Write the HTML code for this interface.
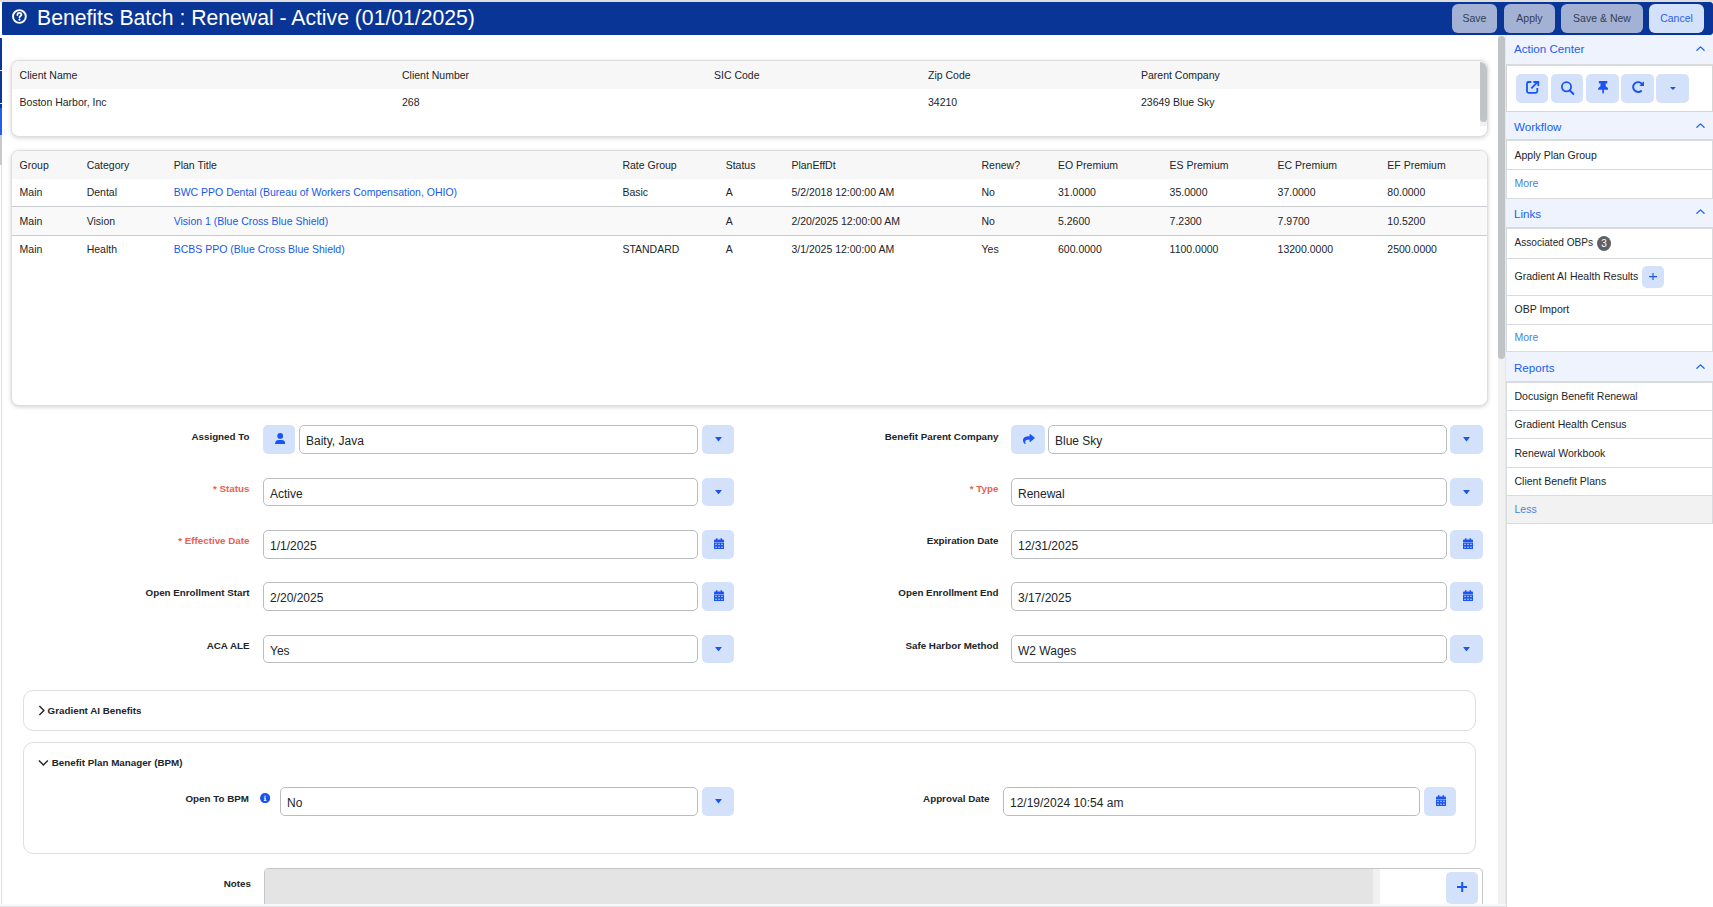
<!DOCTYPE html>
<html><head><meta charset="utf-8"><title>Benefits Batch</title>
<style>
html,body{margin:0;padding:0;}
body{width:1713px;height:907px;position:relative;overflow:hidden;background:#fff;font-family:"Liberation Sans",sans-serif;}
.t{position:absolute;white-space:nowrap;line-height:1;}
.r{position:absolute;}
.hb{border-radius:6px;font-size:10.5px;display:flex;align-items:center;justify-content:center;}
.ib{background:#d4e1fb;border-radius:5px;}
.inp{border:1px solid #b9bdc1;border-radius:5px;background:#fff;box-sizing:border-box;}
</style></head><body>
<div class="r" style="left:0px;top:0px;width:1713px;height:2px;background:#dedede"></div>
<div class="r" style="left:0px;top:2px;width:2px;height:36px;background:#ffffff"></div>
<div class="r" style="left:0px;top:38px;width:1.5px;height:70px;background:#0a3797"></div>
<div class="r" style="left:0px;top:70px;width:1.5px;height:1px;background:#e8ecf5"></div>
<div class="r" style="left:0px;top:103px;width:1.5px;height:1px;background:#e8ecf5"></div>
<div class="r" style="left:0px;top:108px;width:1.5px;height:27px;background:#1f5ff0"></div>
<div class="r" style="left:0px;top:135px;width:1.5px;height:30px;background:#c9c9c9"></div>
<div class="r" style="left:1px;top:165px;width:1px;height:742px;background:#e2e2e2"></div>
<div class="r" style="left:2px;top:2px;width:1711px;height:33px;background:#093696;border-radius:1px 3px 3px 1px"></div>
<svg class="r" style="left:11px;top:9px" width="17" height="16" viewBox="0 0 17 16"><circle cx="8.4" cy="7.5" r="6.4" fill="none" stroke="#fff" stroke-width="1.9"/><path d="M6.4 6.0 C6.4 4.6 7.3 3.9 8.4 3.9 C9.6 3.9 10.4 4.7 10.4 5.7 C10.4 7.0 8.5 7.1 8.5 8.6" fill="none" stroke="#fff" stroke-width="1.8" stroke-linecap="round"/><circle cx="8.5" cy="10.7" r="1.05" fill="#fff"/></svg>
<div class="t" style="left:36.6px;top:8.00px;font-size:21.5px;color:#ffffff;font-weight:normal;transform:scaleX(0.985);transform-origin:0 0;">Benefits Batch : Renewal - Active (01/01/2025)</div>
<div class="r hb" style="left:1452px;top:4px;width:45px;height:29px;background:#a3b2d4;color:#333c52;box-sizing:border-box;padding-bottom:2px">Save</div>
<div class="r hb" style="left:1504px;top:4px;width:51px;height:29px;background:#a3b2d4;color:#333c52;box-sizing:border-box;padding-bottom:2px">Apply</div>
<div class="r hb" style="left:1561px;top:4px;width:82px;height:29px;background:#a3b2d4;color:#333c52;box-sizing:border-box;padding-bottom:2px">Save &amp; New</div>
<div class="r hb" style="left:1649px;top:4px;width:55px;height:29px;background:#d4e1fb;color:#2a62e8;box-sizing:border-box;padding-bottom:2px">Cancel</div>
<div class="r" style="left:1498px;top:35px;width:8px;height:872px;background:#f1f1f1"></div>
<div class="r" style="left:1498px;top:36px;width:7px;height:323px;background:#c1c4c7;border-radius:3.5px"></div>
<div class="r" style="left:1505px;top:35px;width:1px;height:872px;background:#e6e6e6"></div>
<div class="r" style="left:11px;top:60px;width:1477px;height:77px;border:1px solid #dcdfe2;border-radius:8px;box-shadow:0 1px 4px rgba(0,0,0,0.18);background:#fff;box-sizing:border-box"></div>
<div class="r" style="left:12px;top:61px;width:1468px;height:28px;background:#f7f7f7;border-radius:7px 0 0 0"></div>
<div class="r" style="left:1480px;top:61px;width:7px;height:65px;background:#f1f1f1;border-radius:0 7px 0 0"></div>
<div class="r" style="left:1480px;top:62px;width:7px;height:59.5px;background:#c1c4c7;border-radius:0 7px 3.5px 3.5px"></div>
<div class="t" style="left:19.6px;top:70.01px;font-size:10.5px;color:#212529;font-weight:normal;">Client Name</div>
<div class="t" style="left:19.6px;top:96.81px;font-size:10.5px;color:#212529;font-weight:normal;">Boston Harbor, Inc</div>
<div class="t" style="left:402px;top:70.01px;font-size:10.5px;color:#212529;font-weight:normal;">Client Number</div>
<div class="t" style="left:402px;top:96.81px;font-size:10.5px;color:#212529;font-weight:normal;">268</div>
<div class="t" style="left:714px;top:70.01px;font-size:10.5px;color:#212529;font-weight:normal;">SIC Code</div>
<div class="t" style="left:928px;top:70.01px;font-size:10.5px;color:#212529;font-weight:normal;">Zip Code</div>
<div class="t" style="left:928px;top:96.81px;font-size:10.5px;color:#212529;font-weight:normal;">34210</div>
<div class="t" style="left:1141px;top:70.01px;font-size:10.5px;color:#212529;font-weight:normal;">Parent Company</div>
<div class="t" style="left:1141px;top:96.81px;font-size:10.5px;color:#212529;font-weight:normal;">23649 Blue Sky</div>
<div class="r" style="left:11px;top:150px;width:1477px;height:256px;border:1px solid #dcdfe2;border-radius:8px;box-shadow:0 1px 4px rgba(0,0,0,0.18);background:#fff;box-sizing:border-box"></div>
<div class="r" style="left:12px;top:151px;width:1475px;height:28px;background:#f7f7f7;border-radius:7px 7px 0 0"></div>
<div class="r" style="left:12px;top:206px;width:1475px;height:1px;background:#c9cdd1"></div>
<div class="r" style="left:12px;top:207px;width:1475px;height:28px;background:#f9f9f9"></div>
<div class="r" style="left:12px;top:235px;width:1475px;height:1px;background:#c9cdd1"></div>
<div class="t" style="left:19.6px;top:160.01px;font-size:10.5px;color:#212529;font-weight:normal;">Group</div>
<div class="t" style="left:86.7px;top:160.01px;font-size:10.5px;color:#212529;font-weight:normal;">Category</div>
<div class="t" style="left:173.7px;top:160.01px;font-size:10.5px;color:#212529;font-weight:normal;">Plan Title</div>
<div class="t" style="left:622.4px;top:160.01px;font-size:10.5px;color:#212529;font-weight:normal;">Rate Group</div>
<div class="t" style="left:725.7px;top:160.01px;font-size:10.5px;color:#212529;font-weight:normal;">Status</div>
<div class="t" style="left:791.4px;top:160.01px;font-size:10.5px;color:#212529;font-weight:normal;">PlanEffDt</div>
<div class="t" style="left:981.5px;top:160.01px;font-size:10.5px;color:#212529;font-weight:normal;">Renew?</div>
<div class="t" style="left:1058px;top:160.01px;font-size:10.5px;color:#212529;font-weight:normal;">EO Premium</div>
<div class="t" style="left:1169.6px;top:160.01px;font-size:10.5px;color:#212529;font-weight:normal;">ES Premium</div>
<div class="t" style="left:1277.6px;top:160.01px;font-size:10.5px;color:#212529;font-weight:normal;">EC Premium</div>
<div class="t" style="left:1387.3px;top:160.01px;font-size:10.5px;color:#212529;font-weight:normal;">EF Premium</div>
<div class="t" style="left:19.6px;top:187.31px;font-size:10.5px;color:#212529;font-weight:normal;">Main</div>
<div class="t" style="left:86.7px;top:187.31px;font-size:10.5px;color:#212529;font-weight:normal;">Dental</div>
<div class="t" style="left:173.7px;top:187.31px;font-size:10.5px;color:#1659ea;font-weight:normal;">BWC PPO Dental (Bureau of Workers Compensation, OHIO)</div>
<div class="t" style="left:622.4px;top:187.31px;font-size:10.5px;color:#212529;font-weight:normal;">Basic</div>
<div class="t" style="left:725.7px;top:187.31px;font-size:10.5px;color:#212529;font-weight:normal;">A</div>
<div class="t" style="left:791.4px;top:187.31px;font-size:10.5px;color:#212529;font-weight:normal;">5/2/2018 12:00:00 AM</div>
<div class="t" style="left:981.5px;top:187.31px;font-size:10.5px;color:#212529;font-weight:normal;">No</div>
<div class="t" style="left:1058px;top:187.31px;font-size:10.5px;color:#212529;font-weight:normal;">31.0000</div>
<div class="t" style="left:1169.6px;top:187.31px;font-size:10.5px;color:#212529;font-weight:normal;">35.0000</div>
<div class="t" style="left:1277.6px;top:187.31px;font-size:10.5px;color:#212529;font-weight:normal;">37.0000</div>
<div class="t" style="left:1387.3px;top:187.31px;font-size:10.5px;color:#212529;font-weight:normal;">80.0000</div>
<div class="t" style="left:19.6px;top:215.81px;font-size:10.5px;color:#212529;font-weight:normal;">Main</div>
<div class="t" style="left:86.7px;top:215.81px;font-size:10.5px;color:#212529;font-weight:normal;">Vision</div>
<div class="t" style="left:173.7px;top:215.81px;font-size:10.5px;color:#1659ea;font-weight:normal;">Vision 1 (Blue Cross Blue Shield)</div>
<div class="t" style="left:725.7px;top:215.81px;font-size:10.5px;color:#212529;font-weight:normal;">A</div>
<div class="t" style="left:791.4px;top:215.81px;font-size:10.5px;color:#212529;font-weight:normal;">2/20/2025 12:00:00 AM</div>
<div class="t" style="left:981.5px;top:215.81px;font-size:10.5px;color:#212529;font-weight:normal;">No</div>
<div class="t" style="left:1058px;top:215.81px;font-size:10.5px;color:#212529;font-weight:normal;">5.2600</div>
<div class="t" style="left:1169.6px;top:215.81px;font-size:10.5px;color:#212529;font-weight:normal;">7.2300</div>
<div class="t" style="left:1277.6px;top:215.81px;font-size:10.5px;color:#212529;font-weight:normal;">7.9700</div>
<div class="t" style="left:1387.3px;top:215.81px;font-size:10.5px;color:#212529;font-weight:normal;">10.5200</div>
<div class="t" style="left:19.6px;top:244.31px;font-size:10.5px;color:#212529;font-weight:normal;">Main</div>
<div class="t" style="left:86.7px;top:244.31px;font-size:10.5px;color:#212529;font-weight:normal;">Health</div>
<div class="t" style="left:173.7px;top:244.31px;font-size:10.5px;color:#1659ea;font-weight:normal;">BCBS PPO (Blue Cross Blue Shield)</div>
<div class="t" style="left:622.4px;top:244.31px;font-size:10.5px;color:#212529;font-weight:normal;">STANDARD</div>
<div class="t" style="left:725.7px;top:244.31px;font-size:10.5px;color:#212529;font-weight:normal;">A</div>
<div class="t" style="left:791.4px;top:244.31px;font-size:10.5px;color:#212529;font-weight:normal;">3/1/2025 12:00:00 AM</div>
<div class="t" style="left:981.5px;top:244.31px;font-size:10.5px;color:#212529;font-weight:normal;">Yes</div>
<div class="t" style="left:1058px;top:244.31px;font-size:10.5px;color:#212529;font-weight:normal;">600.0000</div>
<div class="t" style="left:1169.6px;top:244.31px;font-size:10.5px;color:#212529;font-weight:normal;">1100.0000</div>
<div class="t" style="left:1277.6px;top:244.31px;font-size:10.5px;color:#212529;font-weight:normal;">13200.0000</div>
<div class="t" style="left:1387.3px;top:244.31px;font-size:10.5px;color:#212529;font-weight:normal;">2500.0000</div>
<div class="t" style="right:1463.5px;top:431.90px;font-size:9.8px;color:#212529;font-weight:bold;text-align:right;">Assigned To</div>
<div class="r ib" style="left:263px;top:425px;width:32px;height:29px"></div>
<svg class="r" style="left:274.8px;top:433px" width="10.4" height="11.3" viewBox="0 0 10.4 11.3" ><circle cx="5.2" cy="2.9" r="2.9" fill="#1a55f2"/><path d="M0 11.3 Q0.2 6.9 3.4 6.9 H7 Q10.2 6.9 10.4 11.3 Z" fill="#1a55f2"/></svg>
<div class="r inp" style="left:299px;top:425px;width:399px;height:29px"></div>
<div class="t" style="left:306px;top:434.64px;font-size:12px;color:#212529;font-weight:normal;">Baity, Java</div>
<div class="r ib" style="left:702px;top:425px;width:32px;height:29px"></div>
<svg class="r" style="left:714.8px;top:437.3px" width="7" height="4.4" viewBox="0 0 7 4.4" ><path d="M0.2 0.3 Q0 0 0.4 0 H6.6 Q7 0 6.8 0.3 L3.5 4.4 Z" fill="#1a55f2"/></svg>
<div class="t" style="right:714.5px;top:431.90px;font-size:9.8px;color:#212529;font-weight:bold;text-align:right;">Benefit Parent Company</div>
<div class="r ib" style="left:1011px;top:425px;width:34px;height:29px"></div>
<svg class="r" style="left:1023px;top:433.8px" width="11.7" height="10.2" viewBox="0 32 512 448" ><path d="M503.691 189.836L327.687 37.851C312.281 24.546 288 35.347 288 56.015v80.053C127.371 137.907 0 170.1 0 322.326c0 61.441 39.581 122.309 83.333 154.132 13.653 9.931 33.111-2.533 28.077-18.631C66.066 312.814 132.917 274.316 288 272.085V360c0 20.7 24.3 31.453 39.687 18.164l176.004-152c11.071-9.562 11.086-26.753 0-36.328z" fill="#1a55f2"/></svg>
<div class="r inp" style="left:1048px;top:425px;width:399px;height:29px"></div>
<div class="t" style="left:1055px;top:434.64px;font-size:12px;color:#212529;font-weight:normal;">Blue Sky</div>
<div class="r ib" style="left:1450px;top:425px;width:33px;height:29px"></div>
<svg class="r" style="left:1463.3px;top:437.3px" width="7" height="4.4" viewBox="0 0 7 4.4" ><path d="M0.2 0.3 Q0 0 0.4 0 H6.6 Q7 0 6.8 0.3 L3.5 4.4 Z" fill="#1a55f2"/></svg>
<div class="t" style="right:1463.5px;top:484.00px;font-size:9.8px;color:#ec5d54;font-weight:bold;text-align:right;">* Status</div>
<div class="r inp" style="left:263px;top:478px;width:435px;height:28px"></div>
<div class="t" style="left:270px;top:487.64px;font-size:12px;color:#212529;font-weight:normal;">Active</div>
<div class="r ib" style="left:702px;top:478px;width:32px;height:28px"></div>
<svg class="r" style="left:714.8px;top:489.8px" width="7" height="4.4" viewBox="0 0 7 4.4" ><path d="M0.2 0.3 Q0 0 0.4 0 H6.6 Q7 0 6.8 0.3 L3.5 4.4 Z" fill="#1a55f2"/></svg>
<div class="t" style="right:714.5px;top:484.00px;font-size:9.8px;color:#ec5d54;font-weight:bold;text-align:right;">* Type</div>
<div class="r inp" style="left:1011px;top:478px;width:436px;height:28px"></div>
<div class="t" style="left:1018px;top:487.64px;font-size:12px;color:#212529;font-weight:normal;">Renewal</div>
<div class="r ib" style="left:1450px;top:478px;width:33px;height:28px"></div>
<svg class="r" style="left:1463.3px;top:489.8px" width="7" height="4.4" viewBox="0 0 7 4.4" ><path d="M0.2 0.3 Q0 0 0.4 0 H6.6 Q7 0 6.8 0.3 L3.5 4.4 Z" fill="#1a55f2"/></svg>
<div class="t" style="right:1463.5px;top:536.00px;font-size:9.8px;color:#ec5d54;font-weight:bold;text-align:right;">* Effective Date</div>
<div class="r inp" style="left:263px;top:530px;width:435px;height:29px"></div>
<div class="t" style="left:270px;top:539.64px;font-size:12px;color:#212529;font-weight:normal;">1/1/2025</div>
<div class="r ib" style="left:702px;top:530px;width:32px;height:29px"></div>
<svg class="r" style="left:714.0px;top:538.0500000000001px" width="10" height="11.3" viewBox="0 0 10 11.3" ><rect x="2" y="0" width="1.4" height="2.4" rx="0.5" fill="#1a55f2"/><rect x="6.6" y="0" width="1.4" height="2.4" rx="0.5" fill="#1a55f2"/><path d="M0 2.6 Q0 1.4 1 1.4 H9 Q10 1.4 10 2.6 V3.9 H0 Z" fill="#1a55f2"/><path d="M0 4.4 H10 V10.3 Q10 11.3 9 11.3 H1 Q0 11.3 0 10.3 Z" fill="#1a55f2"/><g fill="#d4e1fb"><rect x="1.4" y="5.75" width="1.3" height="1.3"/><rect x="4.35" y="5.75" width="1.3" height="1.3"/><rect x="7.3" y="5.75" width="1.3" height="1.3"/><rect x="1.4" y="8.65" width="1.3" height="1.3"/><rect x="4.35" y="8.65" width="1.3" height="1.3"/><rect x="7.3" y="8.65" width="1.3" height="1.3"/></g></svg>
<div class="t" style="right:714.5px;top:536.00px;font-size:9.8px;color:#212529;font-weight:bold;text-align:right;">Expiration Date</div>
<div class="r inp" style="left:1011px;top:530px;width:436px;height:29px"></div>
<div class="t" style="left:1018px;top:539.64px;font-size:12px;color:#212529;font-weight:normal;">12/31/2025</div>
<div class="r ib" style="left:1450px;top:530px;width:33px;height:29px"></div>
<svg class="r" style="left:1462.5px;top:538.0500000000001px" width="10" height="11.3" viewBox="0 0 10 11.3" ><rect x="2" y="0" width="1.4" height="2.4" rx="0.5" fill="#1a55f2"/><rect x="6.6" y="0" width="1.4" height="2.4" rx="0.5" fill="#1a55f2"/><path d="M0 2.6 Q0 1.4 1 1.4 H9 Q10 1.4 10 2.6 V3.9 H0 Z" fill="#1a55f2"/><path d="M0 4.4 H10 V10.3 Q10 11.3 9 11.3 H1 Q0 11.3 0 10.3 Z" fill="#1a55f2"/><g fill="#d4e1fb"><rect x="1.4" y="5.75" width="1.3" height="1.3"/><rect x="4.35" y="5.75" width="1.3" height="1.3"/><rect x="7.3" y="5.75" width="1.3" height="1.3"/><rect x="1.4" y="8.65" width="1.3" height="1.3"/><rect x="4.35" y="8.65" width="1.3" height="1.3"/><rect x="7.3" y="8.65" width="1.3" height="1.3"/></g></svg>
<div class="t" style="right:1463.5px;top:588.00px;font-size:9.8px;color:#212529;font-weight:bold;text-align:right;">Open Enrollment Start</div>
<div class="r inp" style="left:263px;top:582px;width:435px;height:29px"></div>
<div class="t" style="left:270px;top:591.64px;font-size:12px;color:#212529;font-weight:normal;">2/20/2025</div>
<div class="r ib" style="left:702px;top:582px;width:32px;height:29px"></div>
<svg class="r" style="left:714.0px;top:590.0500000000001px" width="10" height="11.3" viewBox="0 0 10 11.3" ><rect x="2" y="0" width="1.4" height="2.4" rx="0.5" fill="#1a55f2"/><rect x="6.6" y="0" width="1.4" height="2.4" rx="0.5" fill="#1a55f2"/><path d="M0 2.6 Q0 1.4 1 1.4 H9 Q10 1.4 10 2.6 V3.9 H0 Z" fill="#1a55f2"/><path d="M0 4.4 H10 V10.3 Q10 11.3 9 11.3 H1 Q0 11.3 0 10.3 Z" fill="#1a55f2"/><g fill="#d4e1fb"><rect x="1.4" y="5.75" width="1.3" height="1.3"/><rect x="4.35" y="5.75" width="1.3" height="1.3"/><rect x="7.3" y="5.75" width="1.3" height="1.3"/><rect x="1.4" y="8.65" width="1.3" height="1.3"/><rect x="4.35" y="8.65" width="1.3" height="1.3"/><rect x="7.3" y="8.65" width="1.3" height="1.3"/></g></svg>
<div class="t" style="right:714.5px;top:588.00px;font-size:9.8px;color:#212529;font-weight:bold;text-align:right;">Open Enrollment End</div>
<div class="r inp" style="left:1011px;top:582px;width:436px;height:29px"></div>
<div class="t" style="left:1018px;top:591.64px;font-size:12px;color:#212529;font-weight:normal;">3/17/2025</div>
<div class="r ib" style="left:1450px;top:582px;width:33px;height:29px"></div>
<svg class="r" style="left:1462.5px;top:590.0500000000001px" width="10" height="11.3" viewBox="0 0 10 11.3" ><rect x="2" y="0" width="1.4" height="2.4" rx="0.5" fill="#1a55f2"/><rect x="6.6" y="0" width="1.4" height="2.4" rx="0.5" fill="#1a55f2"/><path d="M0 2.6 Q0 1.4 1 1.4 H9 Q10 1.4 10 2.6 V3.9 H0 Z" fill="#1a55f2"/><path d="M0 4.4 H10 V10.3 Q10 11.3 9 11.3 H1 Q0 11.3 0 10.3 Z" fill="#1a55f2"/><g fill="#d4e1fb"><rect x="1.4" y="5.75" width="1.3" height="1.3"/><rect x="4.35" y="5.75" width="1.3" height="1.3"/><rect x="7.3" y="5.75" width="1.3" height="1.3"/><rect x="1.4" y="8.65" width="1.3" height="1.3"/><rect x="4.35" y="8.65" width="1.3" height="1.3"/><rect x="7.3" y="8.65" width="1.3" height="1.3"/></g></svg>
<div class="t" style="right:1463.5px;top:641.00px;font-size:9.8px;color:#212529;font-weight:bold;text-align:right;">ACA ALE</div>
<div class="r inp" style="left:263px;top:635px;width:435px;height:28px"></div>
<div class="t" style="left:270px;top:644.64px;font-size:12px;color:#212529;font-weight:normal;">Yes</div>
<div class="r ib" style="left:702px;top:635px;width:32px;height:28px"></div>
<svg class="r" style="left:714.8px;top:646.8px" width="7" height="4.4" viewBox="0 0 7 4.4" ><path d="M0.2 0.3 Q0 0 0.4 0 H6.6 Q7 0 6.8 0.3 L3.5 4.4 Z" fill="#1a55f2"/></svg>
<div class="t" style="right:714.5px;top:641.00px;font-size:9.8px;color:#212529;font-weight:bold;text-align:right;">Safe Harbor Method</div>
<div class="r inp" style="left:1011px;top:635px;width:436px;height:28px"></div>
<div class="t" style="left:1018px;top:644.64px;font-size:12px;color:#212529;font-weight:normal;">W2 Wages</div>
<div class="r ib" style="left:1450px;top:635px;width:33px;height:28px"></div>
<svg class="r" style="left:1463.3px;top:646.8px" width="7" height="4.4" viewBox="0 0 7 4.4" ><path d="M0.2 0.3 Q0 0 0.4 0 H6.6 Q7 0 6.8 0.3 L3.5 4.4 Z" fill="#1a55f2"/></svg>
<div class="r" style="left:23px;top:690px;width:1453px;height:41px;border:1px solid #dcdfe2;border-radius:10px;box-sizing:border-box"></div>
<svg class="r" style="left:38px;top:705px" width="8" height="11" viewBox="0 0 8 11" ><path d="M1.4 0.9 L5.9 5.4 L1.4 9.9" fill="none" stroke="#212529" stroke-width="1.4"/></svg>
<div class="t" style="left:47.6px;top:705.70px;font-size:9.8px;color:#212529;font-weight:bold;">Gradient AI Benefits</div>
<div class="r" style="left:23px;top:742px;width:1453px;height:112px;border:1px solid #dcdfe2;border-radius:10px;box-sizing:border-box"></div>
<svg class="r" style="left:38px;top:759px" width="11" height="8" viewBox="0 0 11 8" ><path d="M0.9 1.4 L5.4 5.9 L9.9 1.4" fill="none" stroke="#212529" stroke-width="1.4"/></svg>
<div class="t" style="left:51.8px;top:757.70px;font-size:9.8px;color:#212529;font-weight:bold;">Benefit Plan Manager (BPM)</div>
<div class="t" style="right:1464px;top:793.70px;font-size:9.8px;color:#212529;font-weight:bold;text-align:right;">Open To BPM</div>
<svg class="r" style="left:259.6px;top:793px" width="10.2" height="10.2" viewBox="0 0 10.2 10.2" ><circle cx="5.1" cy="5.1" r="5.1" fill="#1a55f2"/><rect x="4.5" y="4.6" width="1.25" height="3" fill="#fff"/><rect x="3.9" y="4.6" width="1.6" height="0.75" fill="#fff"/><rect x="3.9" y="7.0" width="2.5" height="0.8" fill="#fff"/><circle cx="5.1" cy="3.3" r="0.75" fill="#fff"/></svg>
<div class="r inp" style="left:280px;top:787px;width:418px;height:29px"></div>
<div class="t" style="left:287px;top:796.64px;font-size:12px;color:#212529;font-weight:normal;">No</div>
<div class="r ib" style="left:702px;top:787px;width:32px;height:29px"></div>
<svg class="r" style="left:714.8px;top:799.3px" width="7" height="4.4" viewBox="0 0 7 4.4" ><path d="M0.2 0.3 Q0 0 0.4 0 H6.6 Q7 0 6.8 0.3 L3.5 4.4 Z" fill="#1a55f2"/></svg>
<div class="t" style="right:723.5px;top:793.70px;font-size:9.8px;color:#212529;font-weight:bold;text-align:right;">Approval Date</div>
<div class="r inp" style="left:1003px;top:787px;width:417px;height:29px"></div>
<div class="t" style="left:1010px;top:796.64px;font-size:12px;color:#212529;font-weight:normal;">12/19/2024 10:54 am</div>
<div class="r ib" style="left:1424px;top:787px;width:32px;height:29px"></div>
<svg class="r" style="left:1436.0px;top:795.0500000000001px" width="10" height="11.3" viewBox="0 0 10 11.3" ><rect x="2" y="0" width="1.4" height="2.4" rx="0.5" fill="#1a55f2"/><rect x="6.6" y="0" width="1.4" height="2.4" rx="0.5" fill="#1a55f2"/><path d="M0 2.6 Q0 1.4 1 1.4 H9 Q10 1.4 10 2.6 V3.9 H0 Z" fill="#1a55f2"/><path d="M0 4.4 H10 V10.3 Q10 11.3 9 11.3 H1 Q0 11.3 0 10.3 Z" fill="#1a55f2"/><g fill="#d4e1fb"><rect x="1.4" y="5.75" width="1.3" height="1.3"/><rect x="4.35" y="5.75" width="1.3" height="1.3"/><rect x="7.3" y="5.75" width="1.3" height="1.3"/><rect x="1.4" y="8.65" width="1.3" height="1.3"/><rect x="4.35" y="8.65" width="1.3" height="1.3"/><rect x="7.3" y="8.65" width="1.3" height="1.3"/></g></svg>
<div class="t" style="right:1462px;top:878.70px;font-size:9.8px;color:#212529;font-weight:bold;text-align:right;">Notes</div>
<div class="r" style="left:264px;top:868px;width:1219px;height:42px;border:1px solid #c4c7ca;border-radius:4px;box-sizing:border-box;background:#fff"></div>
<div class="r" style="left:265px;top:869px;width:1108px;height:38px;background:#e4e4e4"></div>
<div class="r" style="left:1373px;top:869px;width:7px;height:38px;background:#f1f1f1"></div>
<div class="r ib" style="left:1446px;top:872px;width:32px;height:32px"></div>
<svg class="r" style="left:1456.9px;top:882.1px" width="10.4" height="10" viewBox="0 0 10.4 10" ><path d="M5.2 0 V10 M0 5 H10.4" stroke="#1a55f2" stroke-width="2"/></svg>
<div class="r" style="left:1px;top:165px;width:1px;height:742px;background:#dcdfe2"></div>
<div class="r" style="left:0px;top:904px;width:1506px;height:2px;background:#f8f8f8"></div>
<div class="r" style="left:0px;top:906px;width:1506px;height:1px;background:#e2e4e6"></div>
<div class="r" style="left:1506px;top:35px;width:207px;height:872px;background:#fff;border-left:1px solid #d9dcdf;box-sizing:border-box"></div>
<div class="r" style="left:1506px;top:35px;width:207px;height:31px;background:#eef3fd;border-bottom:2px solid #d9dcdf;box-sizing:border-box"></div>
<div class="t" style="left:1514px;top:43.38px;font-size:11.6px;color:#205ff2;font-weight:normal;">Action Center</div>
<svg class="r" style="left:1696.4px;top:45.7px" width="9" height="5" viewBox="0 0 9 5" ><path d="M0.9 4.3 L4.5 0.9 L8.1 4.3" fill="none" stroke="#2060f0" stroke-width="1.25" stroke-linecap="round" stroke-linejoin="round"/></svg>
<div class="r" style="left:1506px;top:66px;width:207px;height:46px;background:#fff;border:1px solid #d6d6d6;border-top:none;box-sizing:border-box"></div>
<div class="r ib" style="left:1516px;top:74px;width:32px;height:29px"></div>
<div class="r ib" style="left:1551px;top:74px;width:32px;height:29px"></div>
<div class="r ib" style="left:1586px;top:74px;width:33px;height:29px"></div>
<div class="r ib" style="left:1621px;top:74px;width:33px;height:29px"></div>
<div class="r ib" style="left:1656px;top:74px;width:33px;height:29px"></div>
<svg class="r" style="left:1516px;top:74px" width="32" height="29" viewBox="0 0 32 29" ><path d="M15.3 8 H12.5 Q11 8 11 9.5 V17.3 Q11 18.8 12.5 18.8 H19.8 Q21.3 18.8 21.3 17.3 V14.1" fill="none" stroke="#1a55f2" stroke-width="1.8"/><path d="M15.3 14.4 L22.1 7.6" stroke="#1a55f2" stroke-width="1.8"/><path d="M17.4 8 H22.3 V12.1" fill="none" stroke="#1a55f2" stroke-width="1.8"/></svg>
<svg class="r" style="left:1551px;top:74px" width="32" height="29" viewBox="0 0 32 29" ><circle cx="15.5" cy="12.8" r="4.6" fill="none" stroke="#1a55f2" stroke-width="1.8"/><path d="M18.9 16.5 L22.4 20" stroke="#1a55f2" stroke-width="1.9" stroke-linecap="round"/></svg>
<svg class="r" style="left:1598px;top:80.7px" width="10.2" height="12.9" viewBox="0 0 384 512" preserveAspectRatio="none"><path d="M298.028 214.267L285.793 96H328c13.255 0 24-10.745 24-24V24c0-13.255-10.745-24-24-24H56C42.745 0 32 10.745 32 24v48c0 13.255 10.745 24 24 24h42.207L85.972 214.267C37.465 236.82 0 277.261 0 328c0 13.255 10.745 24 24 24h136v104.007c0 1.242.289 2.467.845 3.578l24 48c2.941 5.882 11.364 5.893 14.311 0l24-48a8.008 8.008 0 0 0 .845-3.578V352h136c13.255 0 24-10.745 24-24-.001-51.183-37.983-91.42-85.973-113.733z" fill="#1a55f2"/></svg>
<svg class="r" style="left:1631.9px;top:81.1px" width="12.3" height="12.1" viewBox="0 0 512 512" preserveAspectRatio="none"><path d="M256.455 8c66.269.119 126.437 26.233 170.859 68.685l35.715-35.715C478.149 25.851 504 36.559 504 57.941V192c0 13.255-10.745 24-24 24H345.941c-21.382 0-32.090-25.851-16.971-40.971l41.750-41.750c-30.864-28.899-70.801-44.907-113.230-45.273-92.398-.798-170.283 73.977-169.484 169.442C88.764 348.009 162.184 424 256 424c41.127 0 79.997-14.678 110.629-41.556 4.743-4.161 11.906-3.908 16.368.553l39.662 39.662c4.872 4.872 4.631 12.815-.482 17.433C378.202 479.813 319.926 504 256 504 119.034 504 8.001 392.967 8 256.002 7.999 119.193 119.646 7.755 256.455 8z" fill="#1a55f2"/></svg>
<svg class="r" style="left:1670.1px;top:87px" width="5.8" height="3.1" viewBox="0 0 5.8 3.1" ><path d="M0 0 H5.8 L2.9 3.1 Z" fill="#1a55f2"/></svg>
<div class="r" style="left:1506px;top:112px;width:207px;height:29px;background:#eef3fd;border-bottom:2px solid #d9dcdf;box-sizing:border-box"></div>
<div class="t" style="left:1514px;top:121.18px;font-size:11.6px;color:#205ff2;font-weight:normal;">Workflow</div>
<svg class="r" style="left:1696.4px;top:122.7px" width="9" height="5" viewBox="0 0 9 5" ><path d="M0.9 4.3 L4.5 0.9 L8.1 4.3" fill="none" stroke="#2060f0" stroke-width="1.25" stroke-linecap="round" stroke-linejoin="round"/></svg>
<div class="r" style="left:1506px;top:141px;width:207px;height:29px;background:#fff;border-left:1px solid #d9dcdf;border-right:1px solid #d9dcdf;border-bottom:1px solid #d9dcdf;box-sizing:border-box"></div>
<div class="t" style="left:1514.5px;top:150.31px;font-size:10.5px;color:#212529;font-weight:normal;">Apply Plan Group</div>
<div class="r" style="left:1506px;top:170px;width:207px;height:29px;background:#fff;border-left:1px solid #d9dcdf;border-right:1px solid #d9dcdf;border-bottom:1px solid #d9dcdf;box-sizing:border-box"></div>
<div class="t" style="left:1514.5px;top:178.41px;font-size:10.5px;color:#4a84d6;font-weight:normal;">More</div>
<div class="r" style="left:1506px;top:199px;width:207px;height:30px;background:#eef3fd;border-bottom:2px solid #d9dcdf;box-sizing:border-box"></div>
<div class="t" style="left:1514px;top:207.68px;font-size:11.6px;color:#205ff2;font-weight:normal;">Links</div>
<svg class="r" style="left:1696.4px;top:209.2px" width="9" height="5" viewBox="0 0 9 5" ><path d="M0.9 4.3 L4.5 0.9 L8.1 4.3" fill="none" stroke="#2060f0" stroke-width="1.25" stroke-linecap="round" stroke-linejoin="round"/></svg>
<div class="r" style="left:1506px;top:229px;width:207px;height:30px;background:#fff;border-left:1px solid #d9dcdf;border-right:1px solid #d9dcdf;border-bottom:1px solid #d9dcdf;box-sizing:border-box"></div>
<div class="t" style="left:1514.5px;top:238.25px;font-size:10.1px;color:#212529;font-weight:normal;">Associated OBPs</div>
<div class="r" style="left:1597px;top:235.8px;width:14px;height:15px;border-radius:50%;background:#5d6166;color:#fff;font-size:10px;line-height:15px;text-align:center">3</div>
<div class="r" style="left:1506px;top:259px;width:207px;height:36.5px;background:#fff;border-left:1px solid #d9dcdf;border-right:1px solid #d9dcdf;border-bottom:1px solid #d9dcdf;box-sizing:border-box"></div>
<div class="t" style="left:1514.5px;top:271.11px;font-size:10.5px;color:#212529;font-weight:normal;">Gradient AI Health Results</div>
<div class="r ib" style="left:1642px;top:266px;width:22px;height:22px"></div>
<svg class="r" style="left:1649px;top:273px" width="8" height="7.4" viewBox="0 0 8 7.4" ><path d="M4 0 V7.4 M0 3.7 H8" stroke="#1a55f2" stroke-width="1.15"/></svg>
<div class="r" style="left:1506px;top:295.5px;width:207px;height:29.0px;background:#fff;border-left:1px solid #d9dcdf;border-right:1px solid #d9dcdf;border-bottom:1px solid #d9dcdf;box-sizing:border-box"></div>
<div class="t" style="left:1514.5px;top:303.51px;font-size:10.5px;color:#212529;font-weight:normal;">OBP Import</div>
<div class="r" style="left:1506px;top:324.5px;width:207px;height:27.5px;background:#fff;border-left:1px solid #d9dcdf;border-right:1px solid #d9dcdf;border-bottom:1px solid #d9dcdf;box-sizing:border-box"></div>
<div class="t" style="left:1514.5px;top:331.51px;font-size:10.5px;color:#4a84d6;font-weight:normal;">More</div>
<div class="r" style="left:1506px;top:352px;width:207px;height:31px;background:#eef3fd;border-bottom:2px solid #d9dcdf;box-sizing:border-box"></div>
<div class="t" style="left:1514px;top:361.98px;font-size:11.6px;color:#205ff2;font-weight:normal;">Reports</div>
<svg class="r" style="left:1696.4px;top:363.5px" width="9" height="5" viewBox="0 0 9 5" ><path d="M0.9 4.3 L4.5 0.9 L8.1 4.3" fill="none" stroke="#2060f0" stroke-width="1.25" stroke-linecap="round" stroke-linejoin="round"/></svg>
<div class="r" style="left:1506px;top:383px;width:207px;height:28px;background:#fff;border-left:1px solid #d9dcdf;border-right:1px solid #d9dcdf;border-bottom:1px solid #d9dcdf;box-sizing:border-box"></div>
<div class="t" style="left:1514.5px;top:391.01px;font-size:10.5px;color:#212529;font-weight:normal;">Docusign Benefit Renewal</div>
<div class="r" style="left:1506px;top:411px;width:207px;height:28px;background:#fff;border-left:1px solid #d9dcdf;border-right:1px solid #d9dcdf;border-bottom:1px solid #d9dcdf;box-sizing:border-box"></div>
<div class="t" style="left:1514.5px;top:418.81px;font-size:10.5px;color:#212529;font-weight:normal;">Gradient Health Census</div>
<div class="r" style="left:1506px;top:439px;width:207px;height:29px;background:#fff;border-left:1px solid #d9dcdf;border-right:1px solid #d9dcdf;border-bottom:1px solid #d9dcdf;box-sizing:border-box"></div>
<div class="t" style="left:1514.5px;top:447.71px;font-size:10.5px;color:#212529;font-weight:normal;">Renewal Workbook</div>
<div class="r" style="left:1506px;top:468px;width:207px;height:28px;background:#fff;border-left:1px solid #d9dcdf;border-right:1px solid #d9dcdf;border-bottom:1px solid #d9dcdf;box-sizing:border-box"></div>
<div class="t" style="left:1514.5px;top:475.81px;font-size:10.5px;color:#212529;font-weight:normal;">Client Benefit Plans</div>
<div class="r" style="left:1506px;top:496px;width:207px;height:28px;background:#f2f2f2;border-left:1px solid #d9dcdf;border-right:1px solid #d9dcdf;border-bottom:1px solid #d9dcdf;box-sizing:border-box"></div>
<div class="t" style="left:1514.5px;top:504.11px;font-size:10.5px;color:#4a84d6;font-weight:normal;">Less</div>
</body></html>
